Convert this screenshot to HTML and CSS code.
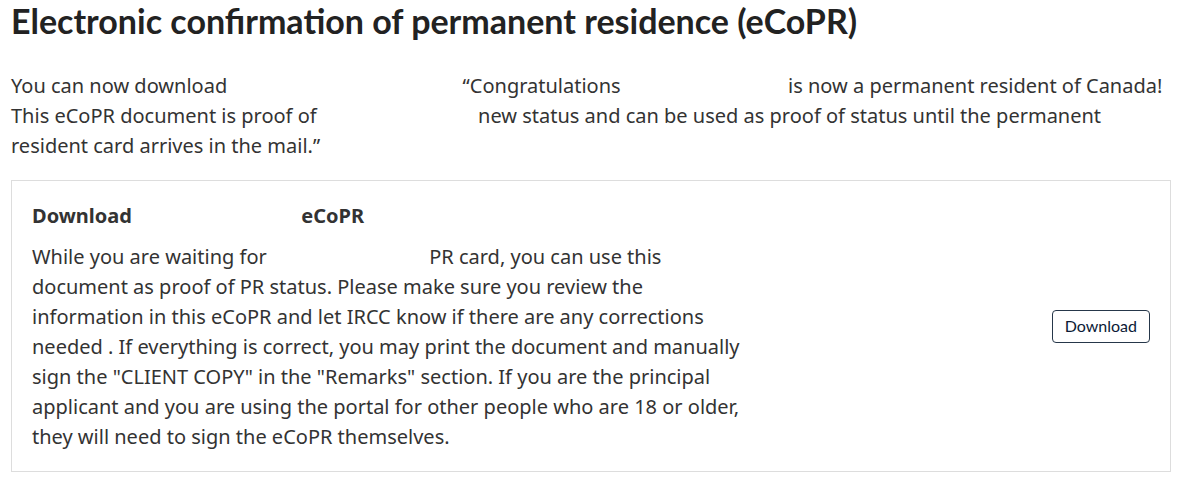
FILE: index.html
```html
<!DOCTYPE html>
<html lang="en">
<head>
<meta charset="utf-8">
<title>eCoPR</title>
<link rel="stylesheet" href="styles.css">
</head>
<body>
<main class="page">
  <h1 class="title">Electronic confirmation of permanent residence (eCoPR)</h1>
  <p class="intro">You can now download <span class="redact r1"></span> “Congratulations <span class="redact r2"></span> is now a permanent resident of Canada! This eCoPR document is proof of <span class="redact r3"></span> new status and can be used as proof of status until the permanent resident card arrives in the mail.”</p>
  <section class="card">
    <div class="card-text">
      <h2 class="card-title">Download <span class="redact r4"></span> eCoPR</h2>
      <p class="card-body">While you are waiting for <span class="redact r5"></span> PR card, you can use this document as proof of PR status. Please make sure you review the information in this eCoPR and let IRCC know if there are any corrections needed . If everything is correct, you may print the document and manually sign the "CLIENT COPY" in the "Remarks" section. If you are the principal applicant and you are using the portal for other people who are 18 or older, they will need to sign the eCoPR themselves.</p>
    </div>
    <div class="card-action">
      <button class="btn" type="button">Download</button>
    </div>
  </section>
</main>
</body>
</html>
```
FILE: styles.css
```css
html, body {
  margin: 0;
  padding: 0;
  background: #ffffff;
}
.page {
  padding: 0 8px 0 11px;
  font-family: "Noto Sans", "DejaVu Sans", sans-serif;
  color: #333333;
}
.title {
  font-family: Lato, "Liberation Sans", sans-serif;
  font-weight: 700;
  font-size: 34px;
  line-height: 40px;
  color: #222222;
  margin: 0;
  padding-top: 1px;
}
.intro {
  font-size: 20px;
  line-height: 30px;
  margin: 30px 0 19px 0;
}
.redact {
  display: inline-block;
  height: 1px;
  vertical-align: baseline;
}
.r1 { width: 225px; }
.r2 { width: 157px; }
.r3 { width: 151px; }
.r4 { width: 159px; }
.r5 { width: 152px; }
.card {
  border: 1px solid #dddddd;
  display: flex;
  align-items: center;
  padding: 20px 20px 19px 20px;
}
.card-text {
  width: 716px;
  flex: none;
}
.card-title {
  font-size: 20px;
  font-weight: 700;
  line-height: 30px;
  margin: 0 0 11px 0;
}
.card-body {
  font-size: 20px;
  line-height: 30px;
  margin: 0;
}
.card-action {
  flex: 1;
  display: flex;
  justify-content: flex-end;
}
.btn {
  font-family: Lato, "Liberation Sans", sans-serif;
  font-size: 16px;
  color: #0b1a36;
  background: #ffffff;
  border: 1px solid #26374a;
  border-radius: 4px;
  padding: 5px 12px 6px 12px;
  line-height: 20px;
  margin-right: 0;
}
```
